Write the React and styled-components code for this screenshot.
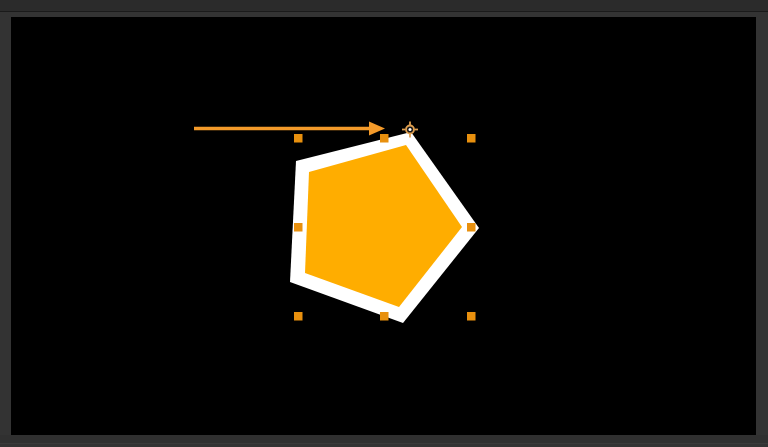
import React from 'react'
import styled, { createGlobalStyle } from 'styled-components'

const Global = createGlobalStyle`
    html, body {
        margin: 0;
        padding: 0;
        background: #2e2e2e;
        font-family: 'Liberation Sans', Arial, sans-serif;
        overflow: hidden;
    }
`

const Window = styled.div`
    width: 768px;
    height: 447px;
    display: flex;
    flex-direction: column;
    background: #323232;
`

const TopBar = styled.div`
    height: 11px;
    flex-shrink: 0;
    background: #2b2b2b;
    border-bottom: 1px solid #1a1a1a;
`

const Workspace = styled.div`
    flex: 1;
    display: flex;
    flex-direction: column;
    padding: 5px 12px 0 11px;
    background: #333333;
`

const Canvas = styled.div`
    position: relative;
    height: 418px;
    flex-shrink: 0;
    background: #000000;
    overflow: hidden;
`

const BottomStrip = styled.div`
    flex: 1;
    border-bottom: 1px solid #3a3a3a;
    margin: 0 -12px 3px -11px;
    background: #303030;
`

const Stage = styled.svg`
    display: block;
    width: 100%;
    height: 100%;
`

// offset of canvas in page coords
const ox = 11
const oy = 17
const pts = (list) => list.map(([x, y]) => `${x - ox},${y - oy}`).join(' ')

const outer = [[411, 132], [479, 228], [403, 323], [290, 282], [296, 161]]
const inner = [[406, 145], [462, 227], [399, 307], [305, 273], [309, 172]]

const handleXs = [298, 384, 471]
const handleYs = [138, 227, 316]

const handles = []
handleYs.forEach((y, r) =>
    handleXs.forEach((x, c) => {
        if (r === 1 && c === 1) return
        handles.push([x, y])
    })
)

export default function App() {
    return (
        <>
            <Global />
            <Window>
                <TopBar />
                <Workspace>
                    <Canvas>
                        <Stage viewBox="0 0 745 418">
                            <polygon points={pts(outer)} fill="#ffffff" />
                            <polygon points={pts(inner)} fill="#ffad00" />
                            <line x1={194 - ox} y1={128.5 - oy} x2={372 - ox} y2={128.5 - oy} stroke="#f39a2a" strokeWidth="3.5" />
                            <polygon points={pts([[369, 121.5], [385, 128.5], [369, 135.5]])} fill="#f39a2a" />
                            {handles.map(([x, y]) => (
                                <rect key={`${x}-${y}`} x={x - 4 - ox} y={y - 4 - oy} width="8.5" height="8.5" fill="#e8900e" />
                            ))}
                            <g transform={`translate(${410 - ox},${129.5 - oy})`} stroke="#e0a050" strokeWidth="1.8" fill="none">
                                <circle r="4" fill="#1a1a1a" />
                                <circle r="1.5" fill="#ffffff" stroke="none" />
                                <line x1="0" y1="-8" x2="0" y2="-4.5" />
                                <line x1="0" y1="4.5" x2="0" y2="8" />
                                <line x1="-8" y1="0" x2="-4.5" y2="0" />
                                <line x1="4.5" y1="0" x2="8" y2="0" />
                            </g>
                        </Stage>
                    </Canvas>
                    <BottomStrip />
                </Workspace>
            </Window>
        </>
    )
}
